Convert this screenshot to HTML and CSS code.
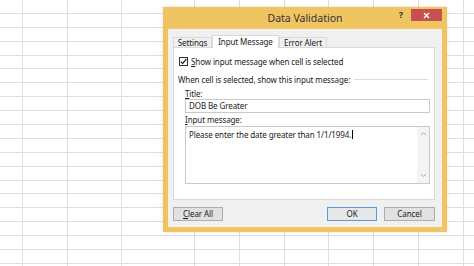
FILE: index.html
```html
<!DOCTYPE html>
<html lang="en">
<head>
    <meta charset="UTF-8">
    <meta name="viewport" content="width=device-width, initial-scale=1.0">
    <link rel="stylesheet" href="styles.css">
    <title>Data Validation</title>
</head>
<body>

    <div class="sheet">
        <div class="col" style="width:23px"></div>
        <div class="col" style="width:45px"></div>
        <div class="col" style="width:54px"></div>
        <div class="col" style="width:73px"></div>
        <div class="col" style="width:45px"></div>
        <div class="col" style="width:45px"></div>
        <div class="col" style="width:44px"></div>
        <div class="col" style="width:45px"></div>
        <div class="col" style="width:45px"></div>
        <div class="col" style="width:45px"></div>
    </div>

    <div class="dialog">
        <div class="titlebar">
            <div class="title">Data Validation</div>
            <div class="controls">
                <span class="help">?</span>
                <span class="close">
                    <svg width="7" height="7" viewBox="0 0 7 7"><path d="M1 1L6 6M6 1L1 6" stroke="#fff" stroke-width="1.4"/></svg>
                </span>
            </div>
        </div>

        <div class="body">
            <div class="tabs">
                <div class="tab" style="width:39px">Settings</div>
                <div class="tab active" style="width:67px">Input Message</div>
                <div class="tab" style="width:48px">Error Alert</div>
            </div>

            <div class="panel">
                <div class="check">
                    <span class="box">
                        <svg width="9" height="9" viewBox="0 0 9 9"><path d="M1.8 4.6L3.6 6.6L7.4 1.8" fill="none" stroke="#222" stroke-width="1.3"/></svg>
                    </span>
                    <span><u>S</u>how input message when cell is selected</span>
                </div>

                <div class="group">
                    <span>When cell is selected, show this input message:</span>
                    <span class="rule"></span>
                </div>

                <div class="field">
                    <div class="label"><u>T</u>itle:</div>
                    <div class="textbox">DOB Be Greater</div>
                    <div class="label"><u>I</u>nput message:</div>
                    <div class="textarea">
                        <div class="msg">Please enter the date greater than 1/1/1994.<span class="caret"></span></div>
                        <div class="scroll">
                            <svg width="7" height="5" viewBox="0 0 7 5"><path d="M1 4L3.5 1.5L6 4" fill="none" stroke="#a6a6a6" stroke-width="1"/></svg>
                            <svg width="7" height="5" viewBox="0 0 7 5"><path d="M1 1L3.5 3.5L6 1" fill="none" stroke="#a6a6a6" stroke-width="1"/></svg>
                        </div>
                    </div>
                </div>
            </div>

            <div class="buttons">
                <div class="btn"><u>C</u>lear All</div>
                <div class="spacer"></div>
                <div class="btn default">OK</div>
                <div class="btn" style="width:51px">Cancel</div>
            </div>
        </div>
    </div>

</body>
</html>
```

FILE: styles.css
```css
body{margin:0;background:#fff;font-family:"Noto Sans",sans-serif;font-size:8px;letter-spacing:-0.1px;color:#1a1a1a;overflow:hidden;}

/* spreadsheet behind the dialog */
.sheet{display:flex;height:266px;background:repeating-linear-gradient(to bottom,transparent 0 12.89px,#dedede 12.89px 13.89px);}
.col{flex:none;box-sizing:border-box;border-right:1px solid #dedede;}

/* dialog window */
.dialog{position:absolute;left:163px;top:7px;width:284px;height:225px;box-sizing:border-box;background:#f1c462;padding:0 5px 5px;display:flex;flex-direction:column;box-shadow:0 0 4px rgba(0,0,0,.12);}
.titlebar{height:22px;flex:none;position:relative;display:flex;align-items:center;}
.title{flex:1;text-align:center;font-size:10.5px;letter-spacing:0;color:#333;}
.controls{position:absolute;right:0;top:2px;display:flex;align-items:flex-start;}
.help{font-size:9px;font-weight:bold;color:#333;margin:0 8px 0 0;line-height:11px;}
.close{width:31px;height:12px;background:#c75050;display:flex;align-items:center;justify-content:center;}

.body{flex:1;background:#f0f0f0;padding:6px 7px 6px 5px;display:flex;flex-direction:column;}

.tabs{height:12px;display:flex;align-items:flex-end;flex:none;}
.tab{height:10px;box-sizing:border-box;border:1px solid #d9d9d9;border-bottom:none;display:flex;align-items:center;justify-content:center;line-height:8px;font-size:8px;}
.tab.active{height:13px;background:#fff;margin-bottom:-1px;position:relative;z-index:1;}

.panel{height:153px;flex:none;box-sizing:border-box;background:#fff;border:1px solid #d9d9d9;padding-top:7px;}
.check{display:flex;align-items:center;height:12px;padding-left:5px;gap:3px;}
.box{width:9px;height:9px;box-sizing:border-box;border:1px solid #333;background:#fff;display:flex;}
.box svg{margin:-1px;}
.group{display:flex;align-items:center;height:12px;margin-top:6px;padding:0 6px 0 4px;gap:4px;}
.rule{flex:1;height:1px;background:#dcdcdc;}
.field{margin:4px 4px 0 11px;}
.label{height:10px;line-height:10px;}
.textbox{height:14px;box-sizing:border-box;border:1px solid #c9c9c9;line-height:12px;padding-left:3px;margin-bottom:2px;}
.textarea{height:58px;box-sizing:border-box;border:1px solid #c9c9c9;display:flex;margin-top:1px;}
.msg{flex:1;padding:2px 0 0 3px;line-height:11px;}
.caret{display:inline-block;width:1px;height:9px;background:#000;vertical-align:-1px;margin-left:1px;}
.scroll{width:12px;background:#f4f4f4;display:flex;flex-direction:column;justify-content:space-between;align-items:center;padding:4px 0 5px;}

.buttons{display:flex;margin-top:7px;height:14px;gap:7px;}
.spacer{flex:1;}
.btn{width:50px;height:14px;box-sizing:border-box;border:1px solid #adadad;background:#e1e1e1;text-align:center;line-height:12px;}
.btn.default{border-color:#5d9bd6;background:#e6e8ea;}
```
